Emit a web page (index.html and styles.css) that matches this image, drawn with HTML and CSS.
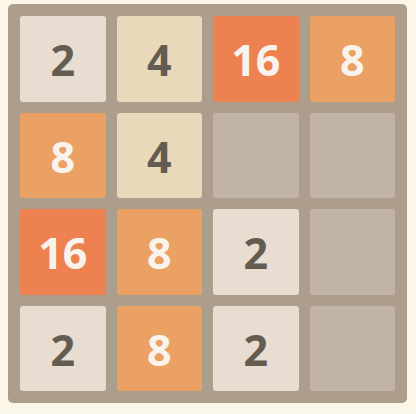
FILE: index.html
```html
<!DOCTYPE html>
<html lang="en">
<head>
    <meta charset="UTF-8">
    <meta name="viewport" content="width=device-width, initial-scale=1.0">
    <title>2048</title>
    <link rel="stylesheet" href="styles.css">
</head>
<body>
    <main class="board">
        <div class="cell tile-2">2</div>
        <div class="cell tile-4">4</div>
        <div class="cell tile-16">16</div>
        <div class="cell tile-8">8</div>

        <div class="cell tile-8">8</div>
        <div class="cell tile-4">4</div>
        <div class="cell"></div>
        <div class="cell"></div>

        <div class="cell tile-16">16</div>
        <div class="cell tile-8">8</div>
        <div class="cell tile-2">2</div>
        <div class="cell"></div>

        <div class="cell tile-2">2</div>
        <div class="cell tile-8">8</div>
        <div class="cell tile-2">2</div>
        <div class="cell"></div>
    </main>
</body>
</html>
```

FILE: styles.css
```css
body {
    margin: 0;
    padding: 4px 9px 4px 8px;
    background-color: #faf7e9;
    font-family: "Open Sans", "Noto Sans", sans-serif;
}
.board {
    display: grid;
    grid-template-columns: repeat(4, 1fr);
    gap: 11px;
    padding: 12px;
    background-color: #ad9d8d;
    border-radius: 5px;
}
.cell {
    display: flex;
    justify-content: center;
    align-items: center;
    box-sizing: border-box;
    min-width: 0;
    padding-top: 2px;
    aspect-ratio: 1;
    background-color: #c2b4a4;
    border-radius: 3px;
    color: #f8f4ed;
    font-size: 43px;
    font-weight: bold;
    line-height: 1;
}
.tile-2 {
    background-color: #e9ddd1;
    color: #655c51;
}
.tile-4 {
    background-color: #e8d9ba;
    color: #655c51;
}
.tile-8 {
    background-color: #eba164;
}
.tile-16 {
    background-color: #ee8150;
}
```
